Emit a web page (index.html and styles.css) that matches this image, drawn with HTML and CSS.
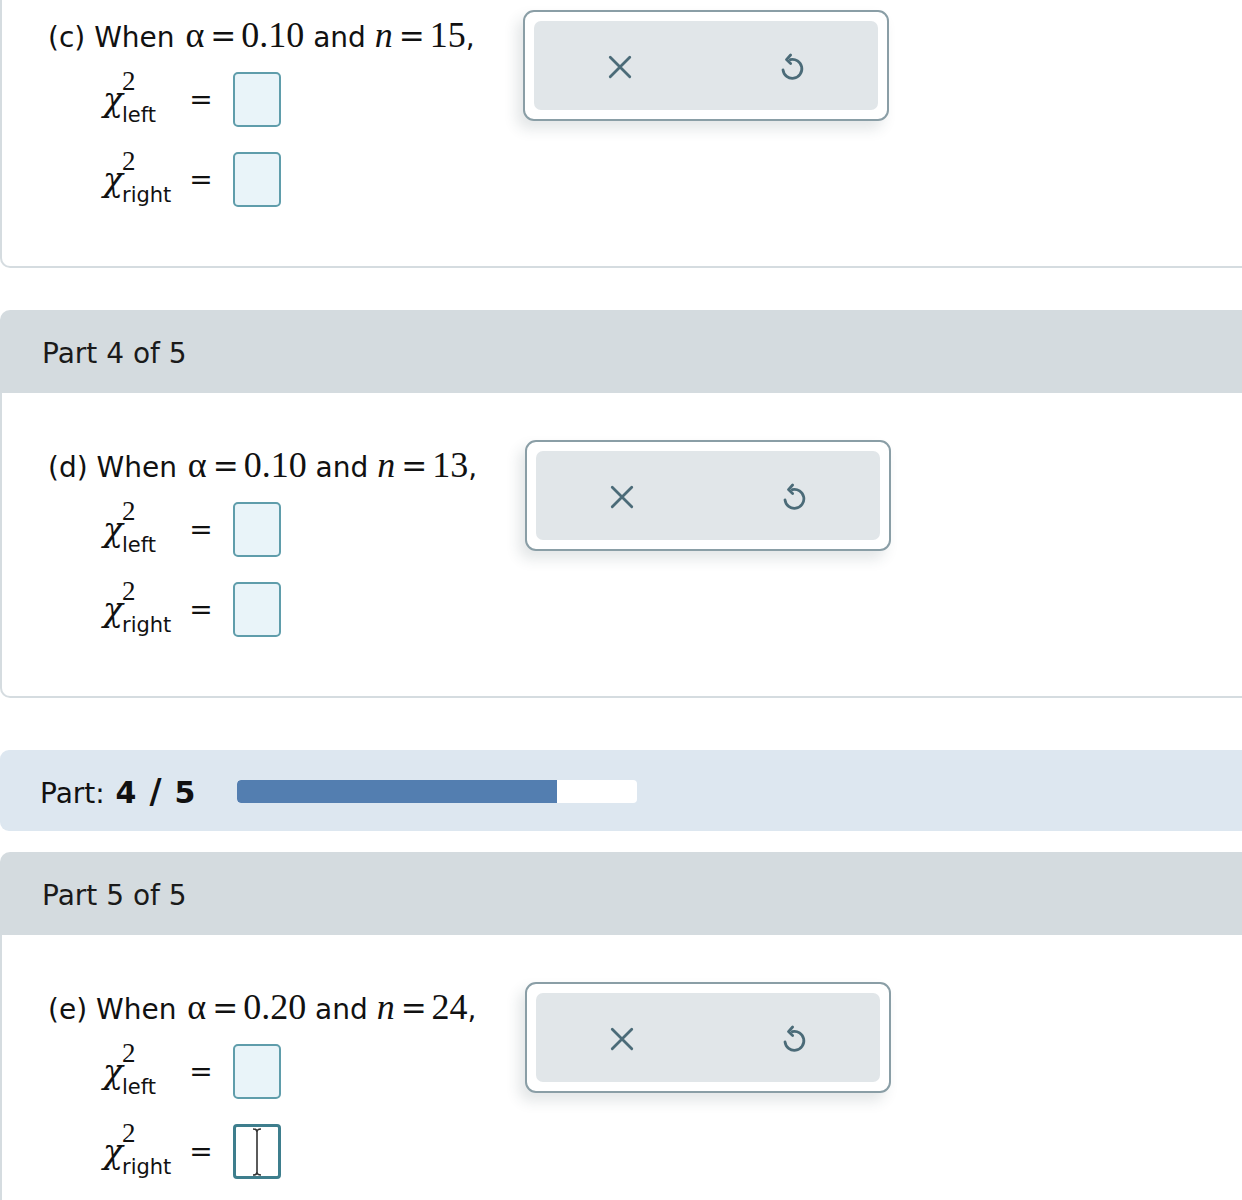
FILE: index.html
```html
<!DOCTYPE html>
<html>
<head>
<meta charset="utf-8">
<link rel="stylesheet" href="styles.css">
</head>
<body>
<div class="page">

  <section class="part">
    <div class="part-body cut">
      <div class="q">
        <div class="q-main">
          <div class="q-line">(c) When <span class="m a">α</span><span class="rel">=</span><span class="m">0.10</span> and <span class="m it">n</span><span class="rel">=</span><span class="m">15</span>,</div>
          <div class="ans-row">
            <span class="chi"><span class="chi-x">χ</span><span class="chi-s"><span class="sup">2</span><span class="sub">left</span></span></span>
            <span class="eqs">=</span>
            <span class="box"></span>
          </div>
          <div class="ans-row">
            <span class="chi"><span class="chi-x">χ</span><span class="chi-s"><span class="sup">2</span><span class="sub">right</span></span></span>
            <span class="eqs">=</span>
            <span class="box"></span>
          </div>
        </div>
        <div class="panel">
          <div class="panel-in">
            <span class="btn"><svg width="26" height="26" viewBox="0 0 24 24"><path d="M3 3 L21 21 M21 3 L3 21" stroke="#4b6b78" stroke-width="2.6" stroke-linecap="round" fill="none"/></svg></span>
            <span class="btn"><svg width="28" height="30" viewBox="0 0 24 26"><path d="M10.5 6.6 A8.2 8.2 0 1 1 4.2 15.5" stroke="#4b6b78" stroke-width="2.4" stroke-linecap="round" fill="none"/><path d="M10.8 2.6 L7.2 6.6 L10.8 10" stroke="#4b6b78" stroke-width="2.4" stroke-linecap="round" stroke-linejoin="round" fill="none"/></svg></span>
          </div>
        </div>
      </div>
    </div>
  </section>

  <section class="part gap-a">
    <div class="part-header">Part 4 of 5</div>
    <div class="part-body">
      <div class="q">
        <div class="q-main">
          <div class="q-line">(d) When <span class="m a">α</span><span class="rel">=</span><span class="m">0.10</span> and <span class="m it">n</span><span class="rel">=</span><span class="m">13</span>,</div>
          <div class="ans-row">
            <span class="chi"><span class="chi-x">χ</span><span class="chi-s"><span class="sup">2</span><span class="sub">left</span></span></span>
            <span class="eqs">=</span>
            <span class="box"></span>
          </div>
          <div class="ans-row">
            <span class="chi"><span class="chi-x">χ</span><span class="chi-s"><span class="sup">2</span><span class="sub">right</span></span></span>
            <span class="eqs">=</span>
            <span class="box"></span>
          </div>
        </div>
        <div class="panel">
          <div class="panel-in">
            <span class="btn"><svg width="26" height="26" viewBox="0 0 24 24"><path d="M3 3 L21 21 M21 3 L3 21" stroke="#4b6b78" stroke-width="2.6" stroke-linecap="round" fill="none"/></svg></span>
            <span class="btn"><svg width="28" height="30" viewBox="0 0 24 26"><path d="M10.5 6.6 A8.2 8.2 0 1 1 4.2 15.5" stroke="#4b6b78" stroke-width="2.4" stroke-linecap="round" fill="none"/><path d="M10.8 2.6 L7.2 6.6 L10.8 10" stroke="#4b6b78" stroke-width="2.4" stroke-linecap="round" stroke-linejoin="round" fill="none"/></svg></span>
          </div>
        </div>
      </div>
    </div>
  </section>

  <div class="progress">
    <span class="progress-label">Part: <b>4<span class="sl">/</span>5</b></span>
    <span class="bar"><span class="bar-fill" style="width:80%"></span></span>
  </div>

  <section class="part gap-c">
    <div class="part-header">Part 5 of 5</div>
    <div class="part-body">
      <div class="q">
        <div class="q-main">
          <div class="q-line">(e) When <span class="m a">α</span><span class="rel">=</span><span class="m">0.20</span> and <span class="m it">n</span><span class="rel">=</span><span class="m">24</span>,</div>
          <div class="ans-row">
            <span class="chi"><span class="chi-x">χ</span><span class="chi-s"><span class="sup">2</span><span class="sub">left</span></span></span>
            <span class="eqs">=</span>
            <span class="box"></span>
          </div>
          <div class="ans-row">
            <span class="chi"><span class="chi-x">χ</span><span class="chi-s"><span class="sup">2</span><span class="sub">right</span></span></span>
            <span class="eqs">=</span>
            <span class="box focus"><svg class="ibeam" width="14" height="50" viewBox="0 0 14 50"><path d="M3 2 Q7 2 7 5 Q7 2 11 2 M7 5 L7 45 M3 48 Q7 48 7 45 Q7 48 11 48" stroke="#333" stroke-width="1.6" fill="none"/></svg></span>
          </div>
        </div>
        <div class="panel">
          <div class="panel-in">
            <span class="btn"><svg width="26" height="26" viewBox="0 0 24 24"><path d="M3 3 L21 21 M21 3 L3 21" stroke="#4b6b78" stroke-width="2.6" stroke-linecap="round" fill="none"/></svg></span>
            <span class="btn"><svg width="28" height="30" viewBox="0 0 24 26"><path d="M10.5 6.6 A8.2 8.2 0 1 1 4.2 15.5" stroke="#4b6b78" stroke-width="2.4" stroke-linecap="round" fill="none"/><path d="M10.8 2.6 L7.2 6.6 L10.8 10" stroke="#4b6b78" stroke-width="2.4" stroke-linecap="round" stroke-linejoin="round" fill="none"/></svg></span>
          </div>
        </div>
      </div>
    </div>
  </section>

</div>
</body>
</html>
```

FILE: styles.css
```css
html, body {
  margin: 0;
  padding: 0;
  background: #ffffff;
  overflow: hidden;
}
body {
  font-family: "DejaVu Sans", Verdana, sans-serif;
  font-size: 28px;
  color: #111;
}
.page {
  width: 1262px;
}
.part-header {
  height: 83px;
  background: #d4dbdf;
  border-top-left-radius: 10px;
  display: flex;
  align-items: center;
  padding-left: 42px;
  padding-top: 4px;
  box-sizing: border-box;
  color: #1a1a1a;
}
.part-body {
  border-left: 2px solid #d5dce0;
  border-bottom: 2px solid #d5dce0;
  border-bottom-left-radius: 10px;
  padding: 47px 0 59px 46px;
}
.part-body.cut {
  padding-top: 10px;
}
.gap-a { margin-top: 42px; }
.gap-c { margin-top: 21px; }

.q {
  display: flex;
  align-items: flex-start;
}
.q-main {
  display: flex;
  flex-direction: column;
}
.q-line {
  height: 50px;
  line-height: 50px;
  white-space: nowrap;
}
.m {
  font-family: "Liberation Serif", "Times New Roman", serif;
  font-size: 36px;
}
.m.a { margin-left: 2px; }
.m.it { font-style: italic; }
.rel {
  font-family: "DejaVu Serif", "Liberation Serif", serif;
  font-size: 31px;
  margin: 0 5px 0 6px;
}

.ans-row {
  display: flex;
  align-items: center;
  height: 55px;
  margin-top: 12px;
  padding-left: 55px;
}
.ans-row + .ans-row {
  margin-top: 25px;
}
.chi {
  width: 82px;
  display: inline-flex;
  align-items: flex-start;
  height: 55px;
}
.chi-x {
  font-family: "DejaVu Serif", "Liberation Serif", serif;
  font-style: italic;
  font-size: 33px;
  line-height: 38px;
  margin-top: 9px;
}
.chi-s {
  display: inline-flex;
  flex-direction: column;
  margin-left: -1px;
}
.sup {
  font-family: "Liberation Serif", "Times New Roman", serif;
  font-size: 27px;
  line-height: 22px;
  margin-top: -2px;
}
.sub {
  font-size: 21px;
  line-height: 26px;
  margin-top: 10px;
}
.eqs {
  width: 32px;
  text-align: center;
  font-family: "DejaVu Serif", "Liberation Serif", serif;
  font-size: 28px;
}
.box {
  margin-left: 16px;
  width: 48px;
  height: 55px;
  box-sizing: border-box;
  border: 2px solid #5f9dab;
  border-radius: 5px;
  background: #e9f4f9;
  display: flex;
  align-items: center;
  justify-content: center;
}
.box.focus {
  border: 3px solid #3e7e8d;
  background: #ffffff;
  border-radius: 4px;
}
.panel {
  margin-left: 48px;
  width: 366px;
  height: 111px;
  box-sizing: border-box;
  border: 2px solid #8a9ea6;
  border-radius: 11px;
  background: #fff;
  padding: 9px;
  box-shadow: -6px 8px 14px rgba(40, 60, 70, 0.13);
}
.panel-in {
  height: 100%;
  background: #e1e6e9;
  border-radius: 7px;
  display: flex;
}
.btn {
  flex: 1;
  display: flex;
  align-items: center;
  justify-content: center;
  padding-top: 2px;
}

.progress {
  margin-top: 52px;
  height: 81px;
  background: #dde7f0;
  border-radius: 9px 0 0 9px;
  display: flex;
  align-items: center;
  padding-left: 40px;
  padding-top: 2px;
  box-sizing: border-box;
}
.progress-label {
  color: #111;
}
.progress-label b {
  font-weight: bold;
  font-size: 30px;
  margin-left: 2px;
}
.sl {
  padding: 0 13px;
  font-size: 33px;
}
.bar {
  margin-left: 42px;
  width: 400px;
  height: 23px;
  background: #fff;
  border-radius: 4px;
  overflow: hidden;
  display: flex;
}
.bar-fill {
  background: #537eb0;
  height: 100%;
  border-radius: 4px 0 0 4px;
}
```
